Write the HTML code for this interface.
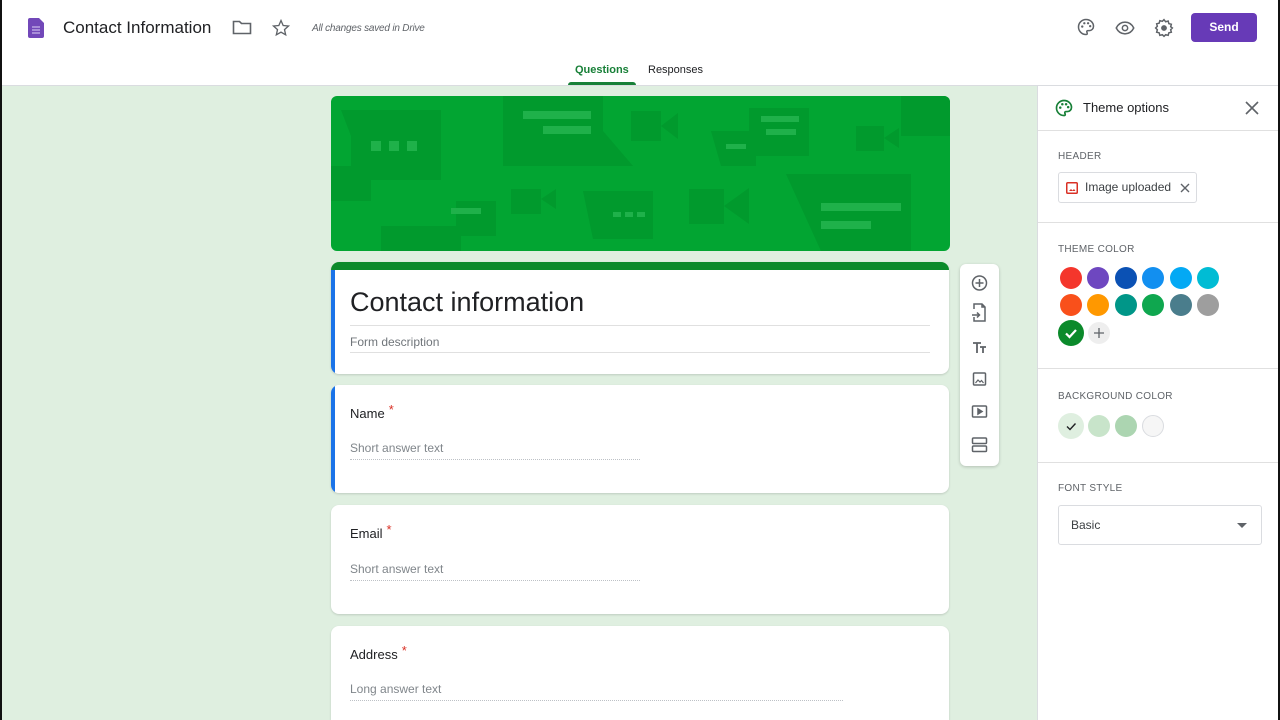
<!DOCTYPE html>
<html style="width:1280px;height:720px;overflow:hidden"><head><meta charset="utf-8"><style>
*{box-sizing:border-box;margin:0;padding:0}
body{width:1280px;height:720px;overflow:hidden;background:#dfefe0;font-family:"Liberation Sans",Arial,sans-serif;position:relative;color:#202124}
.abs{position:absolute}
#top{left:0;top:0;width:1280px;height:86px;background:#fff;border-bottom:1px solid #dadce0}
.edge{top:0;height:720px;width:2px;background:#111;z-index:9}
.card{position:absolute;left:331px;width:618px;background:#fff;border-radius:8px;box-shadow:0 1px 2px rgba(0,0,0,.15)}
.q{font-size:13px;color:#202124;position:absolute;left:19px}
.q b{color:#d93025;font-weight:normal;position:relative;top:-4px;margin-left:4px}
.ph{position:absolute;left:19px;font-size:12px;color:#80868b;border-bottom:1px dotted #bdc1c6;padding-bottom:4px}
#panel{left:1037px;top:86px;width:243px;height:634px;background:#fff;border-left:1px solid #dadce0}
.lbl{position:absolute;left:20px;font-size:10px;color:#5f6368;letter-spacing:.3px}
.sep{position:absolute;left:0;width:243px;height:1px;background:#e0e0e0}
.dot{position:absolute;width:22px;height:22px;border-radius:50%}
</style></head><body>
<div class="abs edge" style="left:0"></div>
<div class="abs edge" style="left:1278px"></div>
<div id="top" class="abs">
 <svg class="abs" style="left:28px;top:18px" width="16" height="20" viewBox="0 0 16 20"><path d="M0 2a2 2 0 0 1 2-2h9l5 5v13a2 2 0 0 1-2 2H2a2 2 0 0 1-2-2z" fill="#7248b9"/><path d="M4 9h8M4 12h8M4 15h8" stroke="#c9b6ea" stroke-width="1.2"/></svg>
 <div class="abs" style="left:63px;top:18px;font-size:17px;color:#202124">Contact Information</div>
 <svg class="abs" style="left:232px;top:19px" width="20" height="16" viewBox="0 0 20 16"><path d="M1.5 2.5h6l2 2h9v10h-17z" fill="none" stroke="#5f6368" stroke-width="1.6"/></svg>
 <svg class="abs" style="left:271px;top:18px" width="20" height="20" viewBox="0 0 24 24"><path d="M12 3l2.6 6 6.4.6-4.8 4.3 1.4 6.3L12 17l-5.6 3.2 1.4-6.3L3 9.6 9.4 9z" fill="none" stroke="#5f6368" stroke-width="1.6"/></svg>
 <div class="abs" style="left:312px;top:23px;font-size:10px;font-style:italic;color:#5f6368;letter-spacing:-.2px">All changes saved in Drive</div>
 <svg class="abs" style="left:1076px;top:17px" width="20" height="20" viewBox="0 0 24 24"><path d="M12 3a9 9 0 0 0 0 18c1 0 1.5-.7 1.5-1.4 0-.8-.6-1.1-.6-1.9 0-.8.7-1.4 1.5-1.4H16a5 5 0 0 0 5-5C21 6.6 17 3 12 3z" fill="none" stroke="#5f6368" stroke-width="1.8"/><circle cx="7.5" cy="11.5" r="1.4" fill="#5f6368"/><circle cx="10" cy="7.5" r="1.4" fill="#5f6368"/><circle cx="14.5" cy="7.5" r="1.4" fill="#5f6368"/><circle cx="17" cy="11" r="1.4" fill="#5f6368"/></svg>
 <svg class="abs" style="left:1115px;top:18px" width="20" height="20" viewBox="0 0 24 24"><path d="M1.5 12C4 7 8 5 12 5s8 2 10.5 7C20 17 16 19 12 19S4 17 1.5 12z" fill="none" stroke="#5f6368" stroke-width="1.8"/><circle cx="12" cy="12" r="3.2" fill="none" stroke="#5f6368" stroke-width="1.8"/></svg>
 <svg class="abs" style="left:1154px;top:18px" width="20" height="20" viewBox="0 0 24 24"><path d="M12 2l2 2.5 3-.8.8 3 3 .8-.8 3L22 12l-2 2 .8 3-3 .8-.8 3-3-.8L12 22l-2-2-3 .8-.8-3-3-.8.8-3L2 12l2-2-.8-3 3-.8.8-3 3 .8z" fill="none" stroke="#5f6368" stroke-width="1.8"/><circle cx="12" cy="12" r="3.5" fill="#5f6368"/></svg>
 <div class="abs" style="left:1191px;top:13px;width:66px;height:29px;background:#673ab7;border-radius:4px;color:#fff;font-size:12px;font-weight:bold;text-align:center;line-height:29px">Send</div>
 <div class="abs" style="left:575px;top:64px;font-size:11px;color:#188038;font-weight:bold">Questions</div>
 <div class="abs" style="left:568px;top:82px;width:68px;height:3px;background:#188038;border-radius:3px 3px 0 0"></div>
 <div class="abs" style="left:648px;top:64px;font-size:11px;color:#202124">Responses</div>
</div>

<div class="abs" style="left:331px;top:96px;width:619px;height:155px;background:#02a532;border-radius:6px;overflow:hidden">
<svg width="619" height="155" viewBox="0 0 619 155">
<g fill="#019a2d">
<path d="M10 14h100v70H40l-20 20V40z"/><rect x="172" y="0" width="100" height="70"/><path d="M272 35l30 35h-30z"/>
<rect x="300" y="15" width="30" height="30"/><path d="M330 30l17-13v26z"/>
<rect x="418" y="12" width="60" height="48"/><path d="M380 35h45v35h-35z"/>
<rect x="525" y="30" width="28" height="25"/><path d="M553 42l15-10v20z"/>
<rect x="570" y="0" width="49" height="40"/>
<rect x="0" y="70" width="40" height="35"/>
<path d="M125 105h40v35h-40z"/><path d="M50 130h80v25H50z"/>
<rect x="180" y="93" width="30" height="25"/><path d="M210 103l15-10v20z"/>
<path d="M252 95h70v48h-60z"/>
<rect x="358" y="93" width="35" height="35"/><path d="M393 110l25-18v36z"/>
<path d="M455 78h125v77H490z"/>
</g>
<g fill="#1fb14a"><rect x="40" y="45" width="10" height="10"/><rect x="58" y="45" width="10" height="10"/><rect x="76" y="45" width="10" height="10"/><rect x="192" y="15" width="68" height="8"/><rect x="212" y="30" width="48" height="8"/><rect x="430" y="20" width="38" height="6"/><rect x="435" y="33" width="30" height="6"/><rect x="490" y="107" width="80" height="8"/><rect x="490" y="125" width="50" height="8"/><rect x="282" y="116" width="8" height="5"/><rect x="294" y="116" width="8" height="5"/><rect x="306" y="116" width="8" height="5"/><rect x="120" y="112" width="30" height="6"/><rect x="395" y="48" width="20" height="5"/></g>
</svg></div>

<div class="card" style="top:262px;height:112px;border-top:8px solid #0b8a2b;overflow:hidden">
 <div class="abs" style="left:0;top:0;width:4px;height:112px;background:#1a73e8"></div>
 <div class="abs" style="left:19px;top:17px;font-size:27px;color:#202124">Contact information</div>
 <div class="abs" style="left:19px;top:55px;width:580px;height:1px;background:#e0e0e0"></div>
 <div class="abs" style="left:19px;top:65px;font-size:12px;color:#70757a">Form description</div>
 <div class="abs" style="left:19px;top:82px;width:580px;height:1px;background:#e0e0e0"></div>
</div>
<div class="card" style="top:385px;height:108px;overflow:hidden">
 <div class="abs" style="left:0;top:0;width:4px;height:108px;background:#1a73e8"></div>
 <div class="q" style="top:21px">Name<b>*</b></div>
 <div class="ph" style="top:56px;width:290px">Short answer text</div>
</div>
<div class="card" style="top:505px;height:109px">
 <div class="q" style="top:21px">Email<b>*</b></div>
 <div class="ph" style="top:57px;width:290px">Short answer text</div>
</div>
<div class="card" style="top:626px;height:94px;border-radius:8px 8px 0 0">
 <div class="q" style="top:21px">Address<b>*</b></div>
 <div class="ph" style="top:56px;width:493px">Long answer text</div>
</div>

<div class="abs" style="left:960px;top:264px;width:39px;height:202px;background:#fff;border-radius:6px;box-shadow:0 1px 3px rgba(0,0,0,.2)">
<svg width="39" height="202" viewBox="0 0 39 202" fill="none" stroke="#5f6368" stroke-width="1.5">
<circle cx="19.5" cy="19" r="7"/><path d="M19.5 15v8M15.5 19h8"/>
<path d="M14 45v-5h8l3 3v14h-11v-4M22 40v3h3M12 51h7M17 48.5l2.5 2.5-2.5 2.5"/>
<path d="M13 79h8M17 79v10M20 83h6M23 83v6" stroke-width="1.8"/>
<rect x="13.5" y="109" width="12" height="12" rx="1"/><path d="M15.5 119l2.5-3 2 2 1.5-1.5 2 2.5" stroke-width="1.2"/>
<rect x="12.5" y="142" width="14" height="11" rx="1"/><path d="M18 145v5l4-2.5z" fill="#5f6368"/>
<rect x="12.5" y="174" width="14" height="5.5" rx="1"/><rect x="12.5" y="182" width="14" height="5.5" rx="1"/>
</svg></div>

<div id="panel" class="abs">
 <div class="sep" style="top:44px"></div>
 <svg class="abs" style="left:16px;top:12px" width="20" height="20" viewBox="0 0 24 24"><path d="M12 3a9 9 0 0 0 0 18c1 0 1.5-.7 1.5-1.4 0-.8-.6-1.1-.6-1.9 0-.8.7-1.4 1.5-1.4H16a5 5 0 0 0 5-5C21 6.6 17 3 12 3z" fill="none" stroke="#188038" stroke-width="2"/><circle cx="7.5" cy="11.5" r="1.5" fill="#188038"/><circle cx="10" cy="7.5" r="1.5" fill="#188038"/><circle cx="14.5" cy="7.5" r="1.5" fill="#188038"/><circle cx="17" cy="11" r="1.5" fill="#188038"/></svg>
 <div class="abs" style="left:45px;top:14px;font-size:13px;color:#202124">Theme options</div>
 <svg class="abs" style="left:207px;top:15px" width="14" height="14" viewBox="0 0 14 14"><path d="M1 1l12 12M13 1L1 13" stroke="#5f6368" stroke-width="1.6"/></svg>
 <div class="lbl" style="top:65px">HEADER</div>
 <div class="abs" style="left:20px;top:86px;width:139px;height:31px;border:1px solid #dadce0;border-radius:3px">
  <svg class="abs" style="left:7px;top:9px" width="12" height="12" viewBox="0 0 12 12"><rect x=".75" y=".75" width="10.5" height="10.5" rx="1" fill="none" stroke="#d93025" stroke-width="1.5"/><path d="M3 9l2-2 1.5 1.5L8 7l1.5 2z" fill="#d93025"/></svg>
  <div class="abs" style="left:26px;top:7px;font-size:12px;color:#3c4043">Image uploaded</div>
  <svg class="abs" style="left:121px;top:10px" width="10" height="10" viewBox="0 0 10 10"><path d="M1 1l8 8M9 1L1 9" stroke="#5f6368" stroke-width="1.4"/></svg>
 </div>
 <div class="sep" style="top:136px"></div>
 <div class="lbl" style="top:158px">THEME COLOR</div>
 <div class="dot" style="left:22px;top:181px;background:#f4362c"></div>
 <div class="dot" style="left:49px;top:181px;background:#6e47c0"></div>
 <div class="dot" style="left:77px;top:181px;background:#0b51b4"></div>
 <div class="dot" style="left:104px;top:181px;background:#128ff0"></div>
 <div class="dot" style="left:132px;top:181px;background:#03a9f4"></div>
 <div class="dot" style="left:159px;top:181px;background:#00bcd4"></div>
 <div class="dot" style="left:22px;top:208px;background:#f9501b"></div>
 <div class="dot" style="left:49px;top:208px;background:#ff9800"></div>
 <div class="dot" style="left:77px;top:208px;background:#009688"></div>
 <div class="dot" style="left:104px;top:208px;background:#0fa74f"></div>
 <div class="dot" style="left:132px;top:208px;background:#4a7d8c"></div>
 <div class="dot" style="left:159px;top:208px;background:#9e9e9e"></div>
 <div class="dot" style="left:20px;top:234px;width:26px;height:26px;background:#0b8a2b"><svg width="26" height="26" viewBox="0 0 26 26"><path d="M8 13.5l3.5 3.5 6.5-7" fill="none" stroke="#fff" stroke-width="2.2"/></svg></div>
 <div class="dot" style="left:50px;top:236px;background:#eeeeee"><svg width="22" height="22" viewBox="0 0 22 22"><path d="M11 6v10M6 11h10" stroke="#5f6368" stroke-width="1.3"/></svg></div>
 <div class="sep" style="top:282px"></div>
 <div class="lbl" style="top:305px">BACKGROUND COLOR</div>
 <div class="dot" style="left:20px;top:327px;width:26px;height:26px;background:#dfefe0"><svg width="26" height="26" viewBox="0 0 26 26"><path d="M9 13.5l3 3 5.5-6" fill="none" stroke="#202124" stroke-width="1.4"/></svg></div>
 <div class="dot" style="left:50px;top:329px;background:#c8e4ca"></div>
 <div class="dot" style="left:77px;top:329px;background:#acd5b1"></div>
 <div class="dot" style="left:104px;top:329px;background:#f6f6f6;border:1px solid #dadce0"></div>
 <div class="sep" style="top:376px"></div>
 <div class="lbl" style="top:397px">FONT STYLE</div>
 <div class="abs" style="left:20px;top:419px;width:204px;height:40px;border:1px solid #dadce0;border-radius:3px">
  <div class="abs" style="left:12px;top:12px;font-size:12px;color:#3c4043">Basic</div>
  <svg class="abs" style="left:178px;top:17px" width="10" height="6" viewBox="0 0 10 6"><path d="M0 0h10L5 5z" fill="#5f6368"/></svg>
 </div>
</div>
</body></html>
